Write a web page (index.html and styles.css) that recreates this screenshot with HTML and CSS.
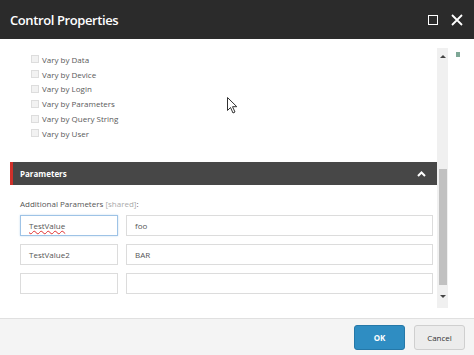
FILE: index.html
```html
<!DOCTYPE html>
<html lang="en">
<head>
  <meta charset="UTF-8" />
  <title>Control Properties</title>
  <link rel="stylesheet" href="styles.css">
</head>
<body>
  <div class="dialog">
    <header class="titlebar">
      <span class="title">Control Properties</span>
      <span class="win-btns">
        <span class="max-btn"></span>
        <svg class="close-btn" width="12" height="12" viewBox="0 0 12 12"><path d="M1 1L11 11M11 1L1 11" stroke="#fff" stroke-width="1.8"/></svg>
      </span>
    </header>

    <div class="body">
      <div class="content">
        <ul class="vary-list">
          <li><span class="cb"></span>Vary by Data</li>
          <li><span class="cb"></span>Vary by Device</li>
          <li><span class="cb"></span>Vary by Login</li>
          <li><span class="cb"></span>Vary by Parameters</li>
          <li><span class="cb"></span>Vary by Query String</li>
          <li><span class="cb"></span>Vary by User</li>
        </ul>

        <div class="section-head">
          <span>Parameters</span>
          <svg width="9" height="6" viewBox="0 0 9 6"><path d="M1 5L4.5 1.5L8 5" stroke="#fff" stroke-width="2" fill="none"/></svg>
        </div>

        <div class="params">
          <div class="params-label">Additional Parameters <span class="shared">[shared]</span>:</div>
          <div class="param-row">
            <div class="field key focused"><span class="spell">TestValue</span></div>
            <div class="field val">foo</div>
          </div>
          <div class="param-row">
            <div class="field key">TestValue2</div>
            <div class="field val">BAR</div>
          </div>
          <div class="param-row">
            <div class="field key"></div>
            <div class="field val"></div>
          </div>
        </div>
      </div>

      <div class="scrollbar">
        <span class="arrow up"></span>
        <span class="thumb"></span>
        <span class="arrow down"></span>
      </div>
      <div class="side">
        <span class="marker"></span>
      </div>
    </div>

    <footer class="footer">
      <button class="btn ok">OK</button>
      <button class="btn cancel">Cancel</button>
    </footer>

    <svg class="cursor" width="11" height="17" viewBox="0 0 11 17"><path d="M0.5 0.5V13.5L3.5 10.5L6 16L8 15L5.5 9.7H9.8Z" fill="#fff" stroke="#333" stroke-width="1"/></svg>
  </div>
</body>
</html>
```

FILE: styles.css
```css
body {
  margin: 0;
  font-family: 'Open Sans', 'Liberation Sans', sans-serif;
  background: #fff;
}
.dialog {
  position: relative;
  width: 474px;
  height: 355px;
  display: flex;
  flex-direction: column;
  overflow: hidden;
}
.titlebar {
  height: 39px;
  background: #2b2b2b;
  display: flex;
  align-items: center;
  justify-content: space-between;
  padding: 0 10px;
  box-sizing: border-box;
}
.title {
  color: #fff;
  font-size: 13px;
  font-weight: 600;
  letter-spacing: -0.4px;
}
.win-btns {
  display: flex;
  align-items: center;
  gap: 13px;
  margin-right: 1px;
}
.max-btn {
  width: 8px;
  height: 8px;
  border: 1.5px solid #fff;
}
.body {
  height: 279px;
  display: flex;
}
.content {
  flex: 1;
  padding-left: 10px;
}
.vary-list {
  list-style: none;
  margin: 0;
  padding: 13px 0 0 21px;
  height: 110px;
}
.vary-list li {
  height: 14.8px;
  display: flex;
  align-items: center;
  font-size: 8px;
  color: #5a5a5a;
}
.cb {
  width: 6px;
  height: 6px;
  border: 1px solid #ddd;
  background: #f2f2f2;
  margin-right: 3px;
}
.section-head {
  height: 23px;
  background: #474747;
  border-left: 3px solid #d0302a;
  display: flex;
  align-items: center;
  justify-content: space-between;
  padding: 0 11px 0 7px;
  color: #fff;
  font-size: 8px;
  font-weight: 700;
}
.params {
  padding: 13px 4px 0 10px;
}
.params-label {
  font-size: 8px;
  color: #555;
  margin-bottom: 6px;
}
.shared {
  color: #aaa;
}
.param-row {
  display: flex;
  gap: 8px;
  margin-bottom: 8px;
}
.field {
  height: 21px;
  box-sizing: border-box;
  border: 1px solid #dcdcdc;
  font-size: 8px;
  color: #555;
  display: flex;
  align-items: center;
  padding-left: 8px;
}
.field.key {
  width: 98px;
}
.field.val {
  flex: 1;
}
.field.focused {
  border-color: #9ec3e6;
  box-shadow: 0 0 2px #c6dcf0;
}
.spell {
  text-decoration: underline wavy #e03030;
  text-decoration-thickness: 1px;
}
.scrollbar {
  width: 11px;
  margin: 9px 0 10px;
  background: #f0f0f0;
  display: flex;
  flex-direction: column;
  align-items: center;
}
.arrow {
  width: 0;
  height: 0;
  border-left: 3px solid transparent;
  border-right: 3px solid transparent;
}
.arrow.up {
  border-bottom: 3px solid #444;
  margin-top: 7px;
}
.arrow.down {
  border-top: 3px solid #444;
  margin-top: 10px;
}
.thumb {
  width: 8px;
  height: 116px;
  background: #c1c1c1;
  margin-top: 111px;
}
.side {
  width: 26px;
}
.marker {
  display: block;
  width: 4px;
  height: 5px;
  background: #7ea796;
  margin: 13px 0 0 8px;
}
.footer {
  flex: 1;
  background: #f4f4f4;
  border-top: 1px solid #e0e0e0;
  display: flex;
  align-items: center;
  justify-content: flex-end;
  gap: 9px;
  padding: 0 9px 0 0;
}
.btn {
  width: 51px;
  height: 25px;
  border-radius: 3px;
  font-family: inherit;
  font-size: 8px;
  cursor: pointer;
}
.btn.ok {
  background: #2f8dc2;
  border: 1px solid #2578a8;
  color: #fff;
  font-weight: 700;
}
.btn.cancel {
  background: #ececec;
  border: 1px solid #cfcfcf;
  color: #333;
}
.cursor {
  position: absolute;
  left: 227px;
  top: 97px;
}
```
